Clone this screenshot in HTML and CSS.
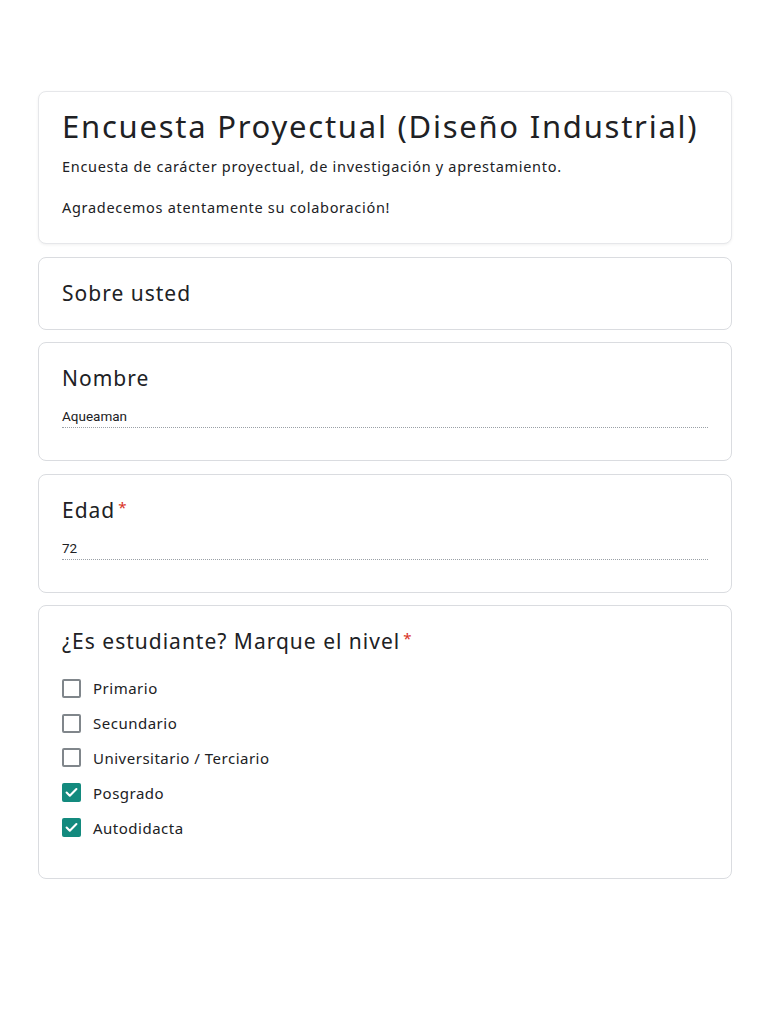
FILE: index.html
```html
<!DOCTYPE html>
<html lang="es">

<head>
    <meta charset="UTF-8">
    <meta name="viewport" content="width=device-width, initial-scale=1.0">
    <title>Encuesta Proyectual (Diseño Industrial)</title>
    <link rel="stylesheet" href="styles.css">
</head>

<body>
    <div class="form-wrapper">
        <!-- Encabezado -->
        <div class="card header-card">
            <h1 class="form-title">Encuesta Proyectual (Diseño Industrial)</h1>
            <p class="form-desc">Encuesta de carácter proyectual, de investigación y aprestamiento.</p>
            <p class="form-desc">Agradecemos atentamente su colaboración!</p>
        </div>

        <div class="card section-card">
            <div class="question">Sobre usted</div>
        </div>

        <div class="card">
            <div class="question">Nombre</div>
            <div class="answer">Aqueaman</div>
        </div>

        <div class="card">
            <div class="question">Edad<span class="required">*</span></div>
            <div class="answer">72</div>
        </div>

        <div class="card checks-card">
            <div class="question">¿Es estudiante? Marque el nivel<span class="required">*</span></div>
            <ul class="options">
                <li class="option"><span class="box"></span>Primario</li>
                <li class="option"><span class="box"></span>Secundario</li>
                <li class="option"><span class="box"></span>Universitario / Terciario</li>
                <li class="option">
                    <span class="box checked">
                        <svg viewBox="0 0 19 19"><path d="M4.6 9.6l3.2 3.1 6.6-6.6" fill="none" stroke="#fff" stroke-width="2.1" stroke-linecap="round" stroke-linejoin="round"/></svg>
                    </span>Posgrado
                </li>
                <li class="option">
                    <span class="box checked">
                        <svg viewBox="0 0 19 19"><path d="M4.6 9.6l3.2 3.1 6.6-6.6" fill="none" stroke="#fff" stroke-width="2.1" stroke-linecap="round" stroke-linejoin="round"/></svg>
                    </span>Autodidacta
                </li>
            </ul>
        </div>
    </div>
</body>

</html>
```

FILE: styles.css
```css
:root {
    --text-color: #202124;
    --border-color: #dadce0;
    --required: #d93025;
    --teal: #138a7e;
}

* {
    margin: 0;
    padding: 0;
    box-sizing: border-box;
}

body {
    background: #fff;
    font-family: 'Noto Sans', sans-serif;
    color: var(--text-color);
}

.form-wrapper {
    width: 694px;
    margin: 91px 0 0 38px;
    display: flex;
    flex-direction: column;
    gap: 12.5px;
}

.card {
    background: #fff;
    border: 1px solid var(--border-color);
    border-radius: 8px;
    padding: 20px 23px 32px 23px;
}

.header-card {
    padding: 12px 23px 26px 23px;
    border-color: #e6e7ea;
    box-shadow: 0 1px 3px rgba(0, 0, 0, 0.06);
}

.form-title {
    font-size: 31px;
    font-weight: 400;
    line-height: 44px;
    letter-spacing: 1.75px;
}

.form-desc {
    font-size: 14.5px;
    line-height: 20px;
    margin-top: 8px;
    letter-spacing: 0.7px;
}

.form-desc + .form-desc {
    margin-top: 21px;
}

.question {
    font-size: 21px;
    line-height: 30px;
    letter-spacing: 1px;
}

.section-card {
    padding: 20px 23px 21px 23px;
}

.required {
    color: var(--required);
    margin-left: 3px;
    font-size: 15px;
    line-height: 0;
    vertical-align: 5px;
}

.answer {
    font-family: Roboto, sans-serif;
    font-size: 13.5px;
    line-height: 20px;
    margin-top: 13px;
    padding-bottom: 1px;
    border-bottom: 1px dotted #9aa0a6;
}

.options {
    list-style: none;
    margin-top: 15px;
}

.option {
    display: flex;
    align-items: center;
    height: 34.8px;
    font-size: 15px;
    letter-spacing: 0.5px;
}

.box {
    width: 19px;
    height: 19px;
    border: 2px solid #80868b;
    border-radius: 2px;
    margin-right: 12px;
    flex-shrink: 0;
}

.box.checked {
    background: var(--teal);
    border: none;
}

.box svg {
    display: block;
    width: 19px;
    height: 19px;
}

.checks-card {
    padding-bottom: 33px;
}
```
